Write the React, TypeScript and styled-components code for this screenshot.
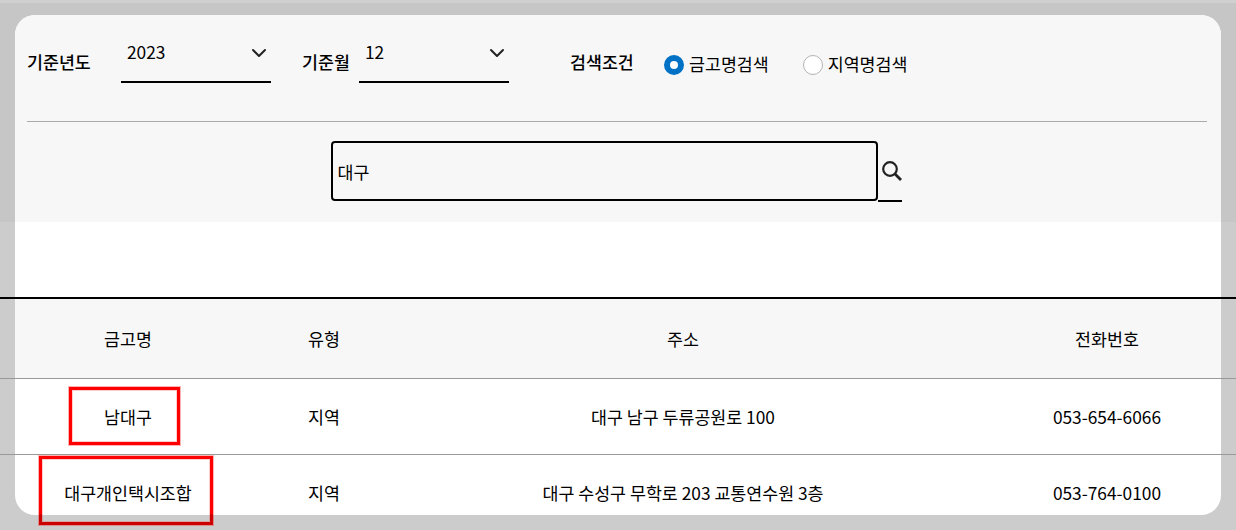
import styled, { createGlobalStyle } from 'styled-components';
import { ChevronDown } from 'lucide-react';

const GlobalStyle = createGlobalStyle`
  html, body {
    margin: 0;
    padding: 0;
  }
  body {
    font-family: "Noto Sans CJK KR", "Noto Sans", sans-serif;
    font-size: 17.33px;
    color: #000;
  }
`

const Page = styled.div`
  width: 1236px;
  height: 530px;
  box-sizing: border-box;
  padding: 15px 15px 15px;
  overflow: hidden;
  background: linear-gradient(#d0d0d0 0 3px, #c6c6c6 3px 222px, #cccccc 222px);
`

const Modal = styled.div`
  position: relative;
  height: 500px;
  display: flex;
  flex-direction: column;
  background: #fff;
  border-radius: 20px;
`

const FilterPanel = styled.div`
  flex: none;
  height: 207px;
  box-sizing: border-box;
  padding: 0 14px 0 12px;
  background: #f7f7f7;
  border-radius: 20px 20px 0 0;
`

const FilterRow = styled.div`
  height: 107px;
  box-sizing: border-box;
  padding-top: 18px;
  display: flex;
  align-items: flex-start;
  border-bottom: 1px solid #aaa;
`

const FieldLabel = styled.label<{ $width: number }>`
  width: ${(p) => p.$width}px;
  flex: none;
  margin-top: 17px;
  line-height: 24px;
  font-weight: 500;
  white-space: nowrap;
`

const SelectWrap = styled.div<{ $after: number }>`
  position: relative;
  width: 150px;
  height: 50px;
  flex: none;
  margin-right: ${(p) => p.$after}px;
  svg {
    position: absolute;
    right: 0;
    top: 8px;
    color: #222;
    pointer-events: none;
  }
`

const Select = styled.select`
  appearance: none;
  display: block;
  width: 100%;
  height: 100%;
  box-sizing: border-box;
  padding: 0 30px 12px 6px;
  border: 0;
  border-bottom: 2px solid #000;
  border-radius: 0;
  background: transparent;
  font: inherit;
  color: #000;
`

const RadioGroup = styled.div`
  display: flex;
  margin-top: 19px;
  height: 24px;
  margin-left: 30px;
  gap: 34px;
`

const RadioLabel = styled.label`
  display: flex;
  align-items: center;
  gap: 5px;
  line-height: 24px;
  white-space: nowrap;
`

const Radio = styled.input`
  appearance: none;
  width: 20px;
  height: 20px;
  margin: 2px 0 0;
  box-sizing: border-box;
  border-radius: 50%;
  border: 1.5px solid #b4b4b4;
  background: #fff;
  &:checked {
    border: 6px solid #0072c6;
  }
`

const SearchRow = styled.div`
  display: flex;
  justify-content: center;
  padding: 19px 2px 0 0;
`

const SearchInput = styled.input`
  width: 547px;
  height: 60px;
  box-sizing: border-box;
  padding: 0 5px;
  border: 2px solid #000;
  border-radius: 4px;
  background: transparent;
  font: inherit;
  color: #000;
  outline: none;
`

const SearchButton = styled.button`
  width: 24px;
  height: 61px;
  box-sizing: border-box;
  padding: 0 0 0 4px;
  border: 0;
  border-bottom: 2px solid #000;
  background: transparent;
  display: flex;
  align-items: center;
  color: #222;
`

const Table = styled.div`
  flex: none;
  margin: 75px -15px 0;
  border-top: 2px solid #000;
`

const Row = styled.div<{ $height: number; $head?: boolean; $last?: boolean }>`
  height: ${(p) => p.$height}px;
  box-sizing: border-box;
  padding: 0 15px;
  display: grid;
  grid-template-columns: 226px 166px 552px 1fr;
  align-items: center;
  text-align: center;
  background: ${(p) => (p.$head ? '#f7f7f7' : 'transparent')};
  background-clip: content-box;
  border-bottom: ${(p) => (p.$last ? '0' : '1px solid #999')};
`

const Cell = styled.div<{ $phone?: boolean }>`
  padding-left: ${(p) => (p.$phone ? 34 : 0)}px;
  white-space: nowrap;
`

const Mark = styled.div<{ $left: number; $top: number; $width: number; $height: number; $fold?: number }>`
  position: absolute;
  left: ${(p) => p.$left}px;
  top: ${(p) => p.$top}px;
  width: ${(p) => p.$width}px;
  height: ${(p) => p.$height}px;
  box-sizing: border-box;
  border: 3px solid #f00;
  box-shadow: 0 0 0 1px rgba(255, 0, 0, 0.3), inset 0 0 0 1px rgba(255, 0, 0, 0.2);
  ${(p) => p.$fold && `border-image: linear-gradient(#f00 0 ${p.$fold}px, #cc0000 ${p.$fold}px) 1;`}
  pointer-events: none;
`

const rows = [
  { name: '남대구', type: '지역', address: '대구 남구 두류공원로 100', phone: '053-654-6066' },
  { name: '대구개인택시조합', type: '지역', address: '대구 수성구 무학로 203 교통연수원 3층', phone: '053-764-0100' },
]

export default function App() {
  return (
    <Page>
      <GlobalStyle />
      <Modal>
        <FilterPanel>
          <FilterRow>
            <FieldLabel $width={94}>기준년도</FieldLabel>
            <SelectWrap $after={31}>
              <Select defaultValue="2023"><option>2023</option><option>2022</option></Select>
              <ChevronDown size={24} strokeWidth={2} />
            </SelectWrap>
            <FieldLabel $width={57}>기준월</FieldLabel>
            <SelectWrap $after={61}>
              <Select defaultValue="12"><option>12</option><option>11</option></Select>
              <ChevronDown size={24} strokeWidth={2} />
            </SelectWrap>
            <FieldLabel $width={64}>검색조건</FieldLabel>
            <RadioGroup>
              <RadioLabel><Radio type="radio" name="mode" defaultChecked />금고명검색</RadioLabel>
              <RadioLabel><Radio type="radio" name="mode" />지역명검색</RadioLabel>
            </RadioGroup>
          </FilterRow>
          <SearchRow>
            <SearchInput defaultValue="대구" />
            <SearchButton aria-label="검색">
              <svg width="20" height="20" viewBox="0 0 20 20" fill="none" stroke="currentColor" strokeWidth="2.2">
                <circle cx="8" cy="8" r="6.8" />
                <path d="M12.8 12.8 L19 19" strokeWidth="2.8" />
              </svg>
            </SearchButton>
          </SearchRow>
        </FilterPanel>
        <Table>
          <Row $head $height={80}>
            <Cell>금고명</Cell>
            <Cell>유형</Cell>
            <Cell>주소</Cell>
            <Cell $phone>전화번호</Cell>
          </Row>
          {rows.map((r, i) => (
            <Row key={r.name} $height={i === 0 ? 76 : 74} $last={i === rows.length - 1}>
              <Cell>{r.name}</Cell>
              <Cell>{r.type}</Cell>
              <Cell>{r.address}</Cell>
              <Cell $phone>{r.phone}</Cell>
            </Row>
          ))}
        </Table>
        <Mark $left={54} $top={372} $width={111} $height={58} />
        <Mark $left={24} $top={441} $width={174} $height={69} $fold={59} />
      </Modal>
    </Page>
  )
}
